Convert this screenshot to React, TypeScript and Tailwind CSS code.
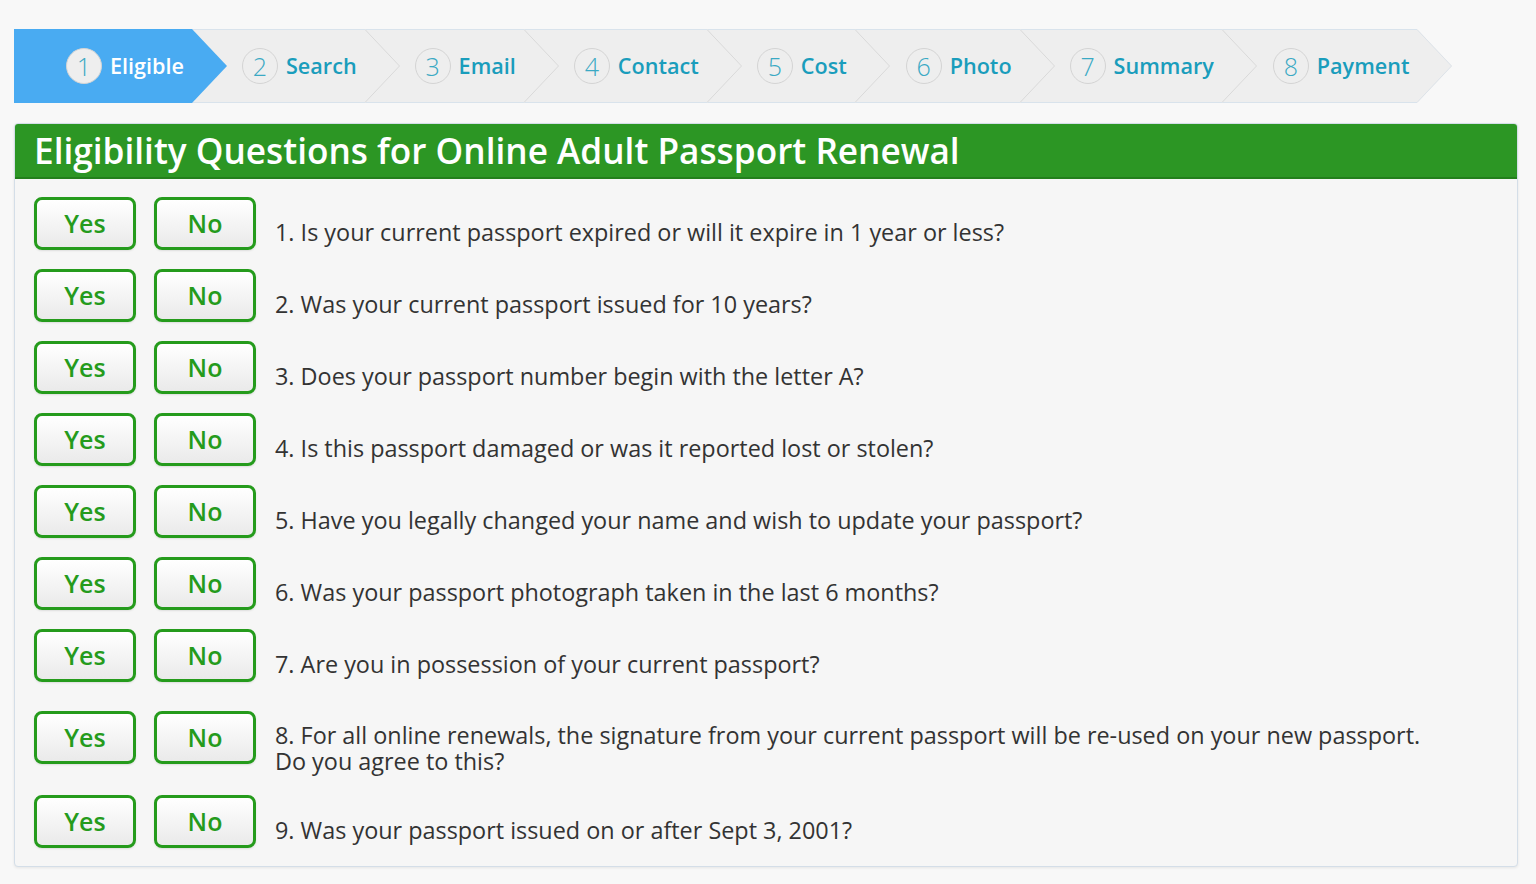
import React, { useState } from "react";

type Step = { n: number; label: string; divider?: boolean };

const steps: Step[] = [
  { n: 1, label: "Eligible" },
  { n: 2, label: "Search" },
  { n: 3, label: "Email" },
  { n: 4, label: "Contact" },
  { n: 5, label: "Cost" },
  { n: 6, label: "Photo", divider: true },
  { n: 7, label: "Summary" },
  { n: 8, label: "Payment", divider: true },
];

type Question = { text: React.ReactNode; rowClass: string; textClass: string };

const questions: Question[] = [
  { text: "1. Is your current passport expired or will it expire in 1 year or less?", rowClass: "", textClass: "pt-[22px]" },
  { text: "2. Was your current passport issued for 10 years?", rowClass: "mt-[19px]", textClass: "pt-[22px]" },
  { text: "3. Does your passport number begin with the letter A?", rowClass: "mt-[19px]", textClass: "pt-[22px]" },
  { text: "4. Is this passport damaged or was it reported lost or stolen?", rowClass: "mt-[19px]", textClass: "pt-[22px]" },
  { text: "5. Have you legally changed your name and wish to update your passport?", rowClass: "mt-[19px]", textClass: "pt-[22px]" },
  { text: "6. Was your passport photograph taken in the last 6 months?", rowClass: "mt-[19px]", textClass: "pt-[22px]" },
  { text: "7. Are you in possession of your current passport?", rowClass: "mt-[19px]", textClass: "pt-[22px]" },
  {
    text: (
      <>
        8. For all online renewals, the signature from your current passport will be re-used on your new passport.
        <br />
        Do you agree to this?
      </>
    ),
    rowClass: "mt-[29px]",
    textClass: "pt-[11px]",
  },
  { text: "9. Was your passport issued on or after Sept 3, 2001?", rowClass: "mt-[21px]", textClass: "pt-[22px]" },
];

function Arrow({ active, last }: { active: boolean; last: boolean }) {
  return (
    <svg
      className="absolute left-full top-[-1px] z-10"
      width="35"
      height="74"
      viewBox="0 0 35 74"
    >
      <polygon points="0,0 35,37 0,74" fill={active ? "#49abf2" : "#eeeeee"} />
      {!active && (
        <polyline
          points="0,0.5 34.5,37 0,73.5"
          fill="none"
          stroke={last ? "#dde3e9" : "#d9d9d9"}
          strokeWidth="1"
        />
      )}
    </svg>
  );
}

function Breadcrumb() {
  return (
    <div className="ml-[14px] mt-[29px] flex h-[74px]">
      {steps.map((s, i) => {
        const active = i === 0;
        return (
          <div
            key={s.n}
            className={`relative flex h-full items-center gap-2 border-y pr-2 ${
              active ? "border-[#49abf2] bg-[#49abf2] pl-[52px]" : "border-[#d9e3ec] bg-[#eeeeee] pl-[50px]"
            } ${s.divider ? "border-l border-l-[#d3dfea]" : ""}`}
          >
            <span
              className={`flex h-[36px] w-[36px] items-center justify-center rounded-full border border-[#d4d4d4] text-[25px] font-light leading-none text-[#3aa9c4] ${
                active ? "bg-[#eeeeee]" : ""
              }`}
            >
              {s.n}
            </span>
            <span
              className={`text-[21.6px] font-semibold ${active ? "text-white" : "text-[#1a9dbc]"}`}
            >
              {s.label}
            </span>
            <Arrow active={active} last={i === steps.length - 1} />
          </div>
        );
      })}
    </div>
  );
}

function AnswerButton({ label, selected, onClick }: { label: string; selected: boolean; onClick: () => void }) {
  return (
    <button
      onClick={onClick}
      className={`flex h-[53px] w-[102px] items-center justify-center rounded-[8px] border-[3px] border-[#259b1c] text-[25px] font-semibold text-[#259b1c] shadow-[0_1px_2px_rgba(0,0,0,0.1)] ${
        selected ? "bg-[#dff0d8]" : "bg-gradient-to-b from-white to-[#eaeaea]"
      }`}
    >
      {label}
    </button>
  );
}

export default function App() {
  const [answers, setAnswers] = useState<Record<number, string>>({});

  return (
    <div className="min-h-[884px] overflow-hidden bg-[#f8f8f8] font-['Open_Sans',sans-serif]">
      <Breadcrumb />

      <div className="mx-[14px] mr-[18px] mt-[20px] overflow-hidden rounded-[4px] border border-[#d4dee8] bg-[#f6f6f6] shadow-[0_1px_3px_rgba(0,0,0,0.08)]">
        <div className="flex h-[55px] items-center border-b-2 border-b-[#237f1c] bg-[#2c9624] pl-[19px]">
          <h1 className="text-[35.2px] font-semibold leading-none text-white">
            Eligibility Questions for Online Adult Passport Renewal
          </h1>
        </div>

        <div className="px-[19px] pb-[18px] pt-[18px]">
          {questions.map((q, i) => (
            <div key={i} className={`flex items-start ${q.rowClass}`}>
              <div className="flex shrink-0 gap-[18px]">
                <AnswerButton
                  label="Yes"
                  selected={answers[i] === "yes"}
                  onClick={() => setAnswers({ ...answers, [i]: "yes" })}
                />
                <AnswerButton
                  label="No"
                  selected={answers[i] === "no"}
                  onClick={() => setAnswers({ ...answers, [i]: "no" })}
                />
              </div>
              <p className={`ml-[19px] text-[23.4px] leading-[26px] text-[#333333] ${q.textClass}`}>{q.text}</p>
            </div>
          ))}
        </div>
      </div>
    </div>
  );
}
